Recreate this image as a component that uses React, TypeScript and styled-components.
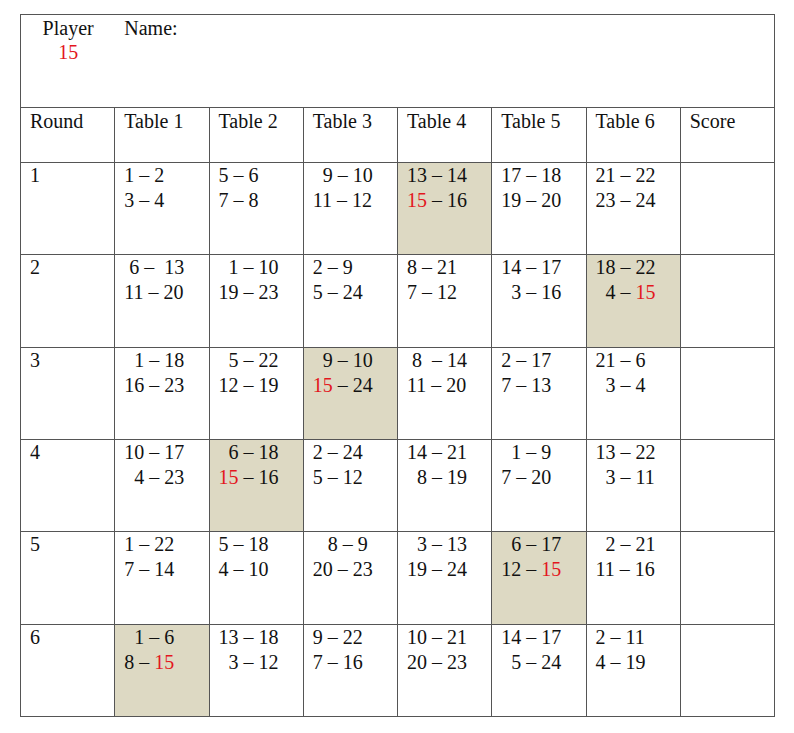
import React, { FC } from 'react';
import styled, { createGlobalStyle } from 'styled-components';

const GlobalStyle = createGlobalStyle`
  html, body {
    margin: 0;
    padding: 0;
    background: #fff;
  }
  body {
    font-family: "Liberation Serif", "Times New Roman", serif;
    color: #111;
  }
`;

const Page = styled.div`
  padding: 14px 0 0 20px;
`;

const Sheet = styled.div`
  width: 755px;
  display: grid;
  grid-template-columns: repeat(8, 1fr);
  grid-template-rows: 93px 55px repeat(6, 92.33px);
  border-top: 1px solid #555;
  border-left: 1px solid #555;
  box-sizing: border-box;
  font-size: 20px;
`;

const PlayerCell = styled.div`
  border-bottom: 1px solid #555;
  display: flex;
  flex-direction: column;
  align-items: center;
  padding-top: 1px;
  line-height: 24px;
`;

const NameCell = styled.div`
  grid-column: span 7;
  border-right: 1px solid #555;
  border-bottom: 1px solid #555;
  padding: 1px 9px 0;
  line-height: 24px;
`;

const Cell = styled.div<{ $shaded?: boolean }>`
  border-right: 1px solid #555;
  border-bottom: 1px solid #555;
  padding: 0 9px;
  line-height: 25px;
  white-space: pre;
  background: ${p => (p.$shaded ? '#ddd9c3' : '#fff')};
`;

const HeadCell = styled(Cell)`
  line-height: 24px;
  padding-top: 1px;
`;

const Red = styled.span`
  color: #e3161d;
`;

const Line = styled.div``;

const headers = ['Round', 'Table 1', 'Table 2', 'Table 3', 'Table 4', 'Table 5', 'Table 6', 'Score'];

const rounds: string[][][] = [
  [
    ['1 – 2', '3 – 4'],
    ['5 – 6', '7 – 8'],
    ['  9 – 10', '11 – 12'],
    ['13 – 14', '15 – 16'],
    ['17 – 18', '19 – 20'],
    ['21 – 22', '23 – 24'],
  ],
  [
    [' 6 –  13', '11 – 20'],
    ['  1 – 10', '19 – 23'],
    ['2 – 9', '5 – 24'],
    ['8 – 21', '7 – 12'],
    ['14 – 17', '  3 – 16'],
    ['18 – 22', '  4 – 15'],
  ],
  [
    ['  1 – 18', '16 – 23'],
    ['  5 – 22', '12 – 19'],
    ['  9 – 10', '15 – 24'],
    [' 8  – 14', '11 – 20'],
    ['2 – 17', '7 – 13'],
    ['21 – 6', '  3 – 4'],
  ],
  [
    ['10 – 17', '  4 – 23'],
    ['  6 – 18', '15 – 16'],
    ['2 – 24', '5 – 12'],
    ['14 – 21', '  8 – 19'],
    ['  1 – 9', '7 – 20'],
    ['13 – 22', '  3 – 11'],
  ],
  [
    ['1 – 22', '7 – 14'],
    ['5 – 18', '4 – 10'],
    ['   8 – 9', '20 – 23'],
    ['  3 – 13', '19 – 24'],
    ['  6 – 17', '12 – 15'],
    ['  2 – 21', '11 – 16'],
  ],
  [
    ['  1 – 6', '8 – 15'],
    ['13 – 18', '  3 – 12'],
    ['9 – 22', '7 – 16'],
    ['10 – 21', '20 – 23'],
    ['14 – 17', '  5 – 24'],
    ['2 – 11', '4 – 19'],
  ],
];

// table where player 15 sits in each round
const playerTable = [3, 5, 2, 1, 4, 0];

const Pairing: FC<{ text: string }> = ({ text }) => (
  <Line>
    {text.split(/(15)/).map((part, i) =>
      part === '15' ? <Red key={i}>15</Red> : <React.Fragment key={i}>{part}</React.Fragment>
    )}
  </Line>
);

const App: FC = () => (
  <Page>
    <GlobalStyle />
    <Sheet>
      <PlayerCell>
        <div>Player</div>
        <Red>15</Red>
      </PlayerCell>
      <NameCell>Name:</NameCell>
      {headers.map(h => (
        <HeadCell key={h}>{h}</HeadCell>
      ))}
      {rounds.map((tables, r) => (
        <React.Fragment key={r}>
          <Cell>{r + 1}</Cell>
          {tables.map((lines, t) => (
            <Cell key={t} $shaded={playerTable[r] === t}>
              {lines.map((l, i) => (
                <Pairing key={i} text={l} />
              ))}
            </Cell>
          ))}
          <Cell />
        </React.Fragment>
      ))}
    </Sheet>
  </Page>
);

export default App;
